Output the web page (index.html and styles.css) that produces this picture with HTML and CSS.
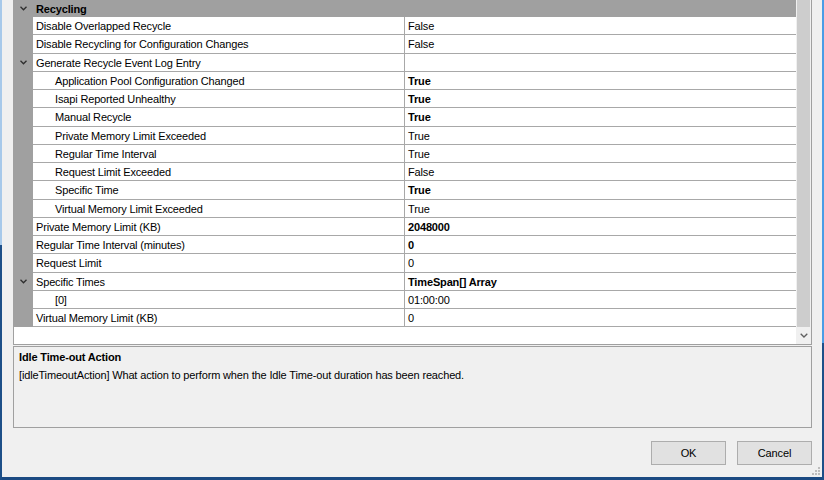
FILE: index.html
```html
<!DOCTYPE html>
<html>
<head>
<meta charset="utf-8">
<link rel="stylesheet" href="styles.css">
</head>
<body>
<div class="frame">
  <div class="dialog">
    <div class="grid">
      <div class="list">
        <div class="cat">
          <div class="m"><svg class="chev" width="7" height="5" viewBox="0 0 7 5"><path d="M0.5 0.8 L3.5 3.8 L6.5 0.8"/></svg></div>
          <div class="cat-name">Recycling</div>
        </div>
        <div class="row"><div class="m"></div><div class="name">Disable Overlapped Recycle</div><div class="val">False</div></div>
        <div class="row"><div class="m"></div><div class="name">Disable Recycling for Configuration Changes</div><div class="val">False</div></div>
        <div class="row"><div class="m"><svg class="chev" width="7" height="5" viewBox="0 0 7 5"><path d="M0.5 0.8 L3.5 3.8 L6.5 0.8"/></svg></div><div class="name">Generate Recycle Event Log Entry</div><div class="val"></div></div>
        <div class="row"><div class="m"></div><div class="name sub">Application Pool Configuration Changed</div><div class="val b">True</div></div>
        <div class="row"><div class="m"></div><div class="name sub">Isapi Reported Unhealthy</div><div class="val b">True</div></div>
        <div class="row"><div class="m"></div><div class="name sub">Manual Recycle</div><div class="val b">True</div></div>
        <div class="row"><div class="m"></div><div class="name sub">Private Memory Limit Exceeded</div><div class="val">True</div></div>
        <div class="row"><div class="m"></div><div class="name sub">Regular Time Interval</div><div class="val">True</div></div>
        <div class="row"><div class="m"></div><div class="name sub">Request Limit Exceeded</div><div class="val">False</div></div>
        <div class="row"><div class="m"></div><div class="name sub">Specific Time</div><div class="val b">True</div></div>
        <div class="row"><div class="m"></div><div class="name sub">Virtual Memory Limit Exceeded</div><div class="val">True</div></div>
        <div class="row"><div class="m"></div><div class="name">Private Memory Limit (KB)</div><div class="val b">2048000</div></div>
        <div class="row"><div class="m"></div><div class="name">Regular Time Interval (minutes)</div><div class="val b">0</div></div>
        <div class="row"><div class="m"></div><div class="name">Request Limit</div><div class="val">0</div></div>
        <div class="row"><div class="m"><svg class="chev" width="7" height="5" viewBox="0 0 7 5"><path d="M0.5 0.8 L3.5 3.8 L6.5 0.8"/></svg></div><div class="name">Specific Times</div><div class="val b">TimeSpan[] Array</div></div>
        <div class="row"><div class="m"></div><div class="name sub">[0]</div><div class="val">01:00:00</div></div>
        <div class="row"><div class="m"></div><div class="name">Virtual Memory Limit (KB)</div><div class="val">0</div></div>
        <div class="filler"></div>
      </div>
      <div class="scrollbar">
        <div class="thumb"></div>
        <div class="arrow"><svg width="8" height="5" viewBox="0 0 8 5"><path d="M0.7 0.7 L4 4 L7.3 0.7"/></svg></div>
      </div>
    </div>
    <div class="desc">
      <div class="desc-title">Idle Time-out Action</div>
      <div class="desc-text">[idleTimeoutAction] What action to perform when the Idle Time-out duration has been reached.</div>
    </div>
    <div class="buttons">
      <div class="btn">OK</div>
      <div class="btn">Cancel</div>
    </div>
    <svg class="grip" width="8" height="8" viewBox="0 0 8 8">
      <rect x="6" y="0" width="2" height="2"/>
      <rect x="3" y="3" width="2" height="2"/>
      <rect x="6" y="3" width="2" height="2"/>
      <rect x="0" y="6" width="2" height="2"/>
      <rect x="3" y="6" width="2" height="2"/>
      <rect x="6" y="6" width="2" height="2"/>
    </svg>
  </div>
</div>
</body>
</html>
```
FILE: styles.css
```css
html, body {
  margin: 0;
  padding: 0;
}
body {
  width: 824px;
  height: 480px;
  overflow: hidden;
  font-family: "Liberation Sans", Arial, sans-serif;
  font-size: 11px;
  letter-spacing: -0.15px;
  color: #000;
}
.frame {
  box-sizing: border-box;
  width: 824px;
  height: 480px;
  padding: 0 2px 3px 2px;
  background:
    linear-gradient(to bottom, #a7c9ea 0, #a7c9ea 245px, #1d4f88 245px) left top / 2px 100% no-repeat,
    linear-gradient(to bottom, #4a9de6 0, #4a9de6 343px, #1d4f88 343px) right top / 2px 100% no-repeat,
    #1b4a82;
}
.dialog {
  position: relative;
  box-sizing: border-box;
  height: 100%;
  background: #f0f0f0;
  padding: 0 10px 0 11px;
  display: flex;
  flex-direction: column;
}
.grid {
  box-sizing: border-box;
  height: 345px;
  flex: none;
  display: flex;
  border: 1px solid #a0a0a0;
  border-top: none;
  background: #fff;
}
.list {
  flex: 1;
  display: flex;
  flex-direction: column;
}
.cat {
  height: 17px;
  flex: none;
  display: flex;
  align-items: center;
  background: #a0a0a0;
}
.m {
  width: 19px;
  flex: none;
  align-self: stretch;
  display: flex;
  align-items: center;
  padding-left: 6px;
  box-sizing: border-box;
  background: #a0a0a0;
}
.chev path {
  fill: none;
  stroke: #2e2e2e;
  stroke-width: 1.3;
}
.cat-name {
  font-weight: bold;
  padding-left: 3px;
}
.row {
  height: 18.25px;
  flex: none;
  display: flex;
}
.name, .val {
  box-sizing: border-box;
  border-bottom: 1px solid #a8a8a8;
  display: flex;
  align-items: center;
  padding-top: 1px;
  white-space: nowrap;
  overflow: hidden;
}
.name {
  width: 372px;
  flex: none;
  padding-left: 3px;
  border-right: 1px solid #a8a8a8;
}
.name.sub {
  padding-left: 22px;
}
.val {
  flex: 1;
  padding-left: 3px;
}
.val.b {
  font-weight: bold;
}
.filler {
  flex: 1;
}
.scrollbar {
  width: 15px;
  flex: none;
  background: #f0f0f0;
  display: flex;
  flex-direction: column;
}
.thumb {
  height: 327px;
  margin: 0 1px;
  background: #cdcdcd;
  flex: none;
}
.arrow {
  flex: 1;
  display: flex;
  align-items: center;
  justify-content: center;
}
.arrow path {
  fill: none;
  stroke: #606060;
  stroke-width: 1.3;
}
.desc {
  box-sizing: border-box;
  height: 82px;
  flex: none;
  margin-top: 1px;
  border: 1px solid #a0a0a0;
  padding: 2px 5px 0 5px;
}
.desc-title {
  font-weight: bold;
  line-height: 16px;
}
.desc-text {
  line-height: 16px;
  margin-top: 2px;
}
.buttons {
  margin-top: 13px;
  display: flex;
  justify-content: flex-end;
  gap: 11px;
}
.btn {
  box-sizing: border-box;
  width: 75px;
  height: 24px;
  background: #e1e1e1;
  border: 1px solid #adadad;
  display: flex;
  align-items: center;
  justify-content: center;
}
.grip {
  position: absolute;
  right: 2px;
  bottom: 2px;
}
.grip rect {
  fill: #bdbdbd;
}
```
